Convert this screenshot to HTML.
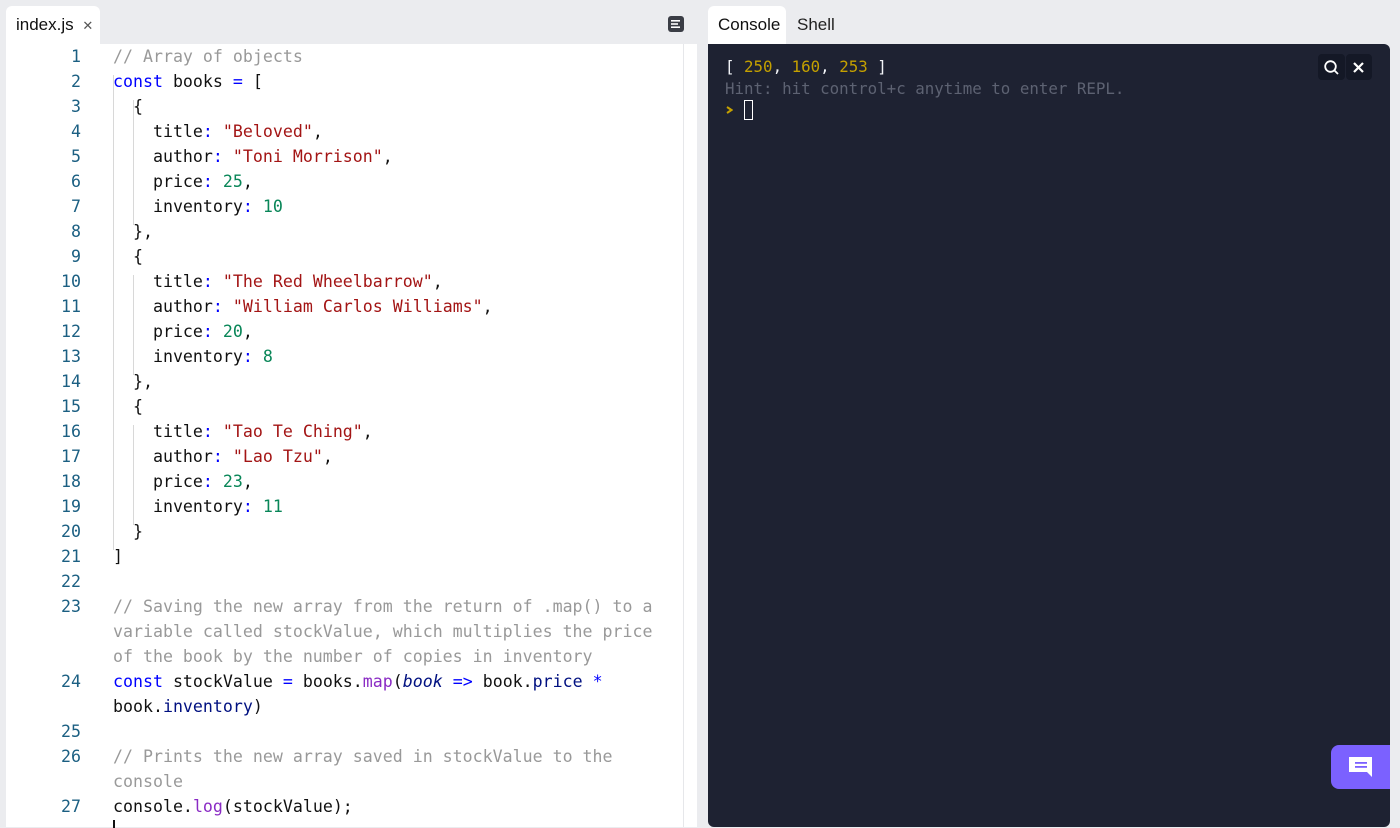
<!DOCTYPE html>
<html><head><meta charset="utf-8"><style>
*{margin:0;padding:0;box-sizing:border-box}
body{width:1400px;height:827px;background:#ebecef;position:relative;overflow:hidden;font-family:"Liberation Sans",sans-serif}
.tab{position:absolute;top:6px;height:38px;background:#fff;border-radius:6px 6px 0 0;font-size:17px;color:#111;line-height:38px;padding-left:10px}
#ed{position:absolute;left:6px;top:44px;width:691px;height:783px;background:#fff}
#gut{position:absolute;left:683px;top:44px;width:14px;height:783px;border-left:1px solid #e6e7ea;background:#fff}
.r{position:absolute;left:0;height:25px;line-height:25px;font-family:"DejaVu Sans Mono","Liberation Mono",monospace;font-size:16.6px;white-space:pre;color:#111}
.n{position:absolute;left:0;width:81px;text-align:right;color:#1b5f82}
.c{position:absolute;left:113px}
.k{color:#0000ff}.s{color:#a31515}.d{color:#098658}.cm{color:#999}.f{color:#8a2bc4}.p{color:#001080}.it{color:#001080;font-style:italic}
.g{position:absolute;width:1px;background:#d8d8d8}
#con{position:absolute;left:708px;top:44px;width:682px;height:783px;background:#1e2232;border-radius:0 6px 6px 6px}
.t{position:absolute;left:725px;font-family:"DejaVu Sans Mono",monospace;font-size:15.8px;white-space:pre;color:#f2f4f8;line-height:20px}
</style></head><body>
<div class="tab" style="left:6px;width:94px">index.js <span style="font-size:13px;color:#555;margin-left:4px">✕</span></div>
<svg style="position:absolute;left:667px;top:15px" width="18" height="18" viewBox="0 0 18 18"><rect x="1" y="1" width="16" height="16" rx="3" fill="#3a3d45"/><rect x="4" y="5" width="9" height="1.6" fill="#fff"/><rect x="4" y="8.2" width="7" height="1.6" fill="#fff"/><rect x="4" y="11.4" width="9" height="1.6" fill="#fff"/></svg>
<div class="tab" style="left:708px;width:78px">Console</div>
<div style="position:absolute;left:797px;top:6px;line-height:38px;font-size:17px;color:#222">Shell</div>
<div id="ed"></div><div id="gut"></div>
<div style="position:absolute;left:0;top:44px;width:700px;height:783px">
<div class="g" style="left:133px;top:56px;height:25px"></div>
<div class="g" style="left:133px;top:81px;height:100px"></div>
<div class="g" style="left:113px;top:31px;height:475px"></div>
<div class="g" style="left:133px;top:231px;height:100px"></div>
<div class="g" style="left:133px;top:381px;height:100px"></div>
<div class="r" style="top:0"><span class="n">1</span><span class="c cm">// Array of objects</span></div>
<div class="r" style="top:25px"><span class="n">2</span><span class="c"><span class="k">const</span> books <span class="k">=</span> [</span></div>
<div class="r" style="top:50px"><span class="n">3</span><span class="c">  {</span></div>
<div class="r" style="top:75px"><span class="n">4</span><span class="c">    title<span class="k">:</span> <span class="s">"Beloved"</span>,</span></div>
<div class="r" style="top:100px"><span class="n">5</span><span class="c">    author<span class="k">:</span> <span class="s">"Toni Morrison"</span>,</span></div>
<div class="r" style="top:125px"><span class="n">6</span><span class="c">    price<span class="k">:</span> <span class="d">25</span>,</span></div>
<div class="r" style="top:150px"><span class="n">7</span><span class="c">    inventory<span class="k">:</span> <span class="d">10</span></span></div>
<div class="r" style="top:175px"><span class="n">8</span><span class="c">  },</span></div>
<div class="r" style="top:200px"><span class="n">9</span><span class="c">  {</span></div>
<div class="r" style="top:225px"><span class="n">10</span><span class="c">    title<span class="k">:</span> <span class="s">"The Red Wheelbarrow"</span>,</span></div>
<div class="r" style="top:250px"><span class="n">11</span><span class="c">    author<span class="k">:</span> <span class="s">"William Carlos Williams"</span>,</span></div>
<div class="r" style="top:275px"><span class="n">12</span><span class="c">    price<span class="k">:</span> <span class="d">20</span>,</span></div>
<div class="r" style="top:300px"><span class="n">13</span><span class="c">    inventory<span class="k">:</span> <span class="d">8</span></span></div>
<div class="r" style="top:325px"><span class="n">14</span><span class="c">  },</span></div>
<div class="r" style="top:350px"><span class="n">15</span><span class="c">  {</span></div>
<div class="r" style="top:375px"><span class="n">16</span><span class="c">    title<span class="k">:</span> <span class="s">"Tao Te Ching"</span>,</span></div>
<div class="r" style="top:400px"><span class="n">17</span><span class="c">    author<span class="k">:</span> <span class="s">"Lao Tzu"</span>,</span></div>
<div class="r" style="top:425px"><span class="n">18</span><span class="c">    price<span class="k">:</span> <span class="d">23</span>,</span></div>
<div class="r" style="top:450px"><span class="n">19</span><span class="c">    inventory<span class="k">:</span> <span class="d">11</span></span></div>
<div class="r" style="top:475px"><span class="n">20</span><span class="c">  }</span></div>
<div class="r" style="top:500px"><span class="n">21</span><span class="c">]</span></div>
<div class="r" style="top:525px"><span class="n">22</span></div>
<div class="r" style="top:550px"><span class="n">23</span><span class="c cm">// Saving the new array from the return of .map() to a</span></div>
<div class="r" style="top:575px"><span class="c cm">variable called stockValue, which multiplies the price</span></div>
<div class="r" style="top:600px"><span class="c cm">of the book by the number of copies in inventory</span></div>
<div class="r" style="top:625px"><span class="n">24</span><span class="c"><span class="k">const</span> stockValue <span class="k">=</span> books.<span class="f">map</span>(<span class="it">book</span> <span class="k">=&gt;</span> book.<span class="p">price</span> <span class="k">*</span></span></div>
<div class="r" style="top:650px"><span class="c">book.<span class="p">inventory</span>)</span></div>
<div class="r" style="top:675px"><span class="n">25</span></div>
<div class="r" style="top:700px"><span class="n">26</span><span class="c cm">// Prints the new array saved in stockValue to the</span></div>
<div class="r" style="top:725px"><span class="c cm">console</span></div>
<div class="r" style="top:750px"><span class="n">27</span><span class="c">console.<span class="f">log</span>(stockValue);</span></div>
<div style="position:absolute;left:113px;top:776px;width:2px;height:8px;background:#111"></div>
</div>
<div id="con"></div>
<div class="t" style="top:57px">[ <span style="color:#c4a000">250</span>, <span style="color:#c4a000">160</span>, <span style="color:#c4a000">253</span> ]</div>
<div class="t" style="top:79px;color:#5d6272">Hint: hit control+c anytime to enter REPL.</div>
<svg style="position:absolute;left:726px;top:106px" width="7" height="8" viewBox="0 0 7 8"><path d="M1 1L5.5 4L1 7" fill="none" stroke="#c4a000" stroke-width="2"/></svg>
<div style="position:absolute;left:744px;top:100px;width:9px;height:20px;border:1.5px solid #fff"></div>
<div style="position:absolute;left:1318px;top:54px;width:27px;height:26px;background:#141826;border-radius:4px"></div>
<div style="position:absolute;left:1346px;top:54px;width:26px;height:26px;background:#141826;border-radius:4px"></div>
<svg style="position:absolute;left:1323px;top:59px" width="17" height="17" viewBox="0 0 17 17"><circle cx="7.5" cy="7.5" r="5.3" fill="none" stroke="#fff" stroke-width="1.8"/><path d="M11.5 11.5L15 15" stroke="#fff" stroke-width="1.8"/></svg>
<svg style="position:absolute;left:1352px;top:61px" width="13" height="13" viewBox="0 0 13 13"><path d="M2 2L11 11M11 2L2 11" stroke="#fff" stroke-width="2.2"/></svg>
<div style="position:absolute;left:1331px;top:745px;width:60px;height:44px;background:#7b61ff;border-radius:8px 0 0 8px"></div>
<svg style="position:absolute;left:1347px;top:755px" width="28" height="24" viewBox="0 0 28 24"><path d="M2 2H25V17H25V22L20 17H2Z" fill="#fff"/><rect x="8" y="7" width="12" height="1.8" fill="#7b61ff"/><rect x="8" y="11" width="12" height="1.8" fill="#7b61ff"/></svg>
<div style="position:absolute;left:1390px;top:44px;width:10px;height:783px;background:#ebecef"></div>
</body></html>
